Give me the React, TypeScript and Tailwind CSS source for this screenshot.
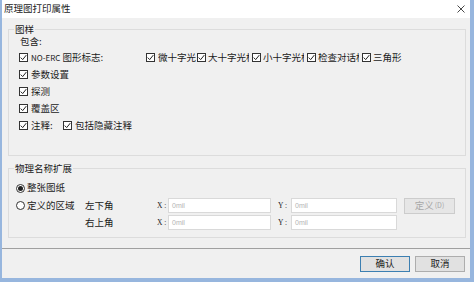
function Box({ checked = true }: { checked?: boolean }) {
  return (
    <span className="w-[9px] h-[9px] border border-[#333] bg-white flex items-center justify-center shrink-0">
      {checked && (
        <svg width="7" height="7" viewBox="0 0 7 7">
          <path d="M0.7 3.6 L2.7 5.6 L6.3 1.1" fill="none" stroke="#222" strokeWidth="1" />
        </svg>
      )}
    </span>
  );
}

function Radio({ checked = false }: { checked?: boolean }) {
  return (
    <span className="w-[9px] h-[9px] rounded-full border border-[#333] bg-white flex items-center justify-center shrink-0">
      {checked && <span className="w-[5px] h-[5px] rounded-full bg-[#222]" />}
    </span>
  );
}

function Field() {
  return (
    <div className="h-[15px] border border-[#d9d9d9] bg-white flex items-center pl-[3px] text-[7px] text-[#b4b4b4] font-['Liberation_Sans',sans-serif]">
      0mil
    </div>
  );
}

export default function App() {
  return (
    <div className="w-[474px] h-[282px] flex flex-col border-l-2 border-r-4 border-b-4 border-[#97b6de] bg-[#f0f0f0] text-[#1a1a1a] text-[9.5px] leading-none font-['Noto_Sans_CJK_SC',sans-serif]">
      {/* title bar */}
      <div className="h-[18px] bg-white flex items-center justify-between pl-[2px] pr-[5px] shrink-0">
        <span>原理图打印属性</span>
        <svg width="8" height="8" viewBox="0 0 8 8">
          <path d="M0.5 0.5 L7.5 7.5 M7.5 0.5 L0.5 7.5" stroke="#333" strokeWidth="0.9" />
        </svg>
      </div>

      <div className="flex-1 flex flex-col pl-[6px]">
        {/* 图样 */}
        <div className="relative mt-[11px] w-[458px] h-[127px] border border-[#dcdcdc] pt-[5px] pl-[10px]">
          <span className="absolute left-[5px] top-[-7px] px-[1px] bg-[#f0f0f0] leading-[12px]">图样</span>
          <div className="h-[14px] flex items-center ml-[1px]">包含:</div>
          <div className="h-[17px] flex items-center">
            <div className="w-[127px] flex items-center gap-[3px]">
              <Box />
              <span>
                <span className="text-[8px]">NO-ERC</span> 图形标志:
              </span>
            </div>
            <div className="w-[51px] flex items-center gap-[3px]">
              <Box />
              <span className="w-[38px] overflow-hidden whitespace-nowrap">微十字光标</span>
            </div>
            <div className="w-[55px] flex items-center gap-[2px]">
              <Box />
              <span className="w-[41px] overflow-hidden whitespace-nowrap">大十字光标</span>
            </div>
            <div className="w-[55px] flex items-center gap-[2px]">
              <Box />
              <span className="w-[41px] overflow-hidden whitespace-nowrap">小十字光标</span>
            </div>
            <div className="w-[55px] flex items-center gap-[2px]">
              <Box />
              <span className="w-[41px] overflow-hidden whitespace-nowrap">检查对话框</span>
            </div>
            <div className="flex items-center gap-[2px]">
              <Box />
              <span>三角形</span>
            </div>
          </div>
          <div className="h-[17px] flex items-center gap-[3px]">
            <Box />
            <span>参数设置</span>
          </div>
          <div className="h-[17px] flex items-center gap-[3px]">
            <Box />
            <span>探测</span>
          </div>
          <div className="h-[17px] flex items-center gap-[3px]">
            <Box />
            <span>覆盖区</span>
          </div>
          <div className="h-[17px] flex items-center">
            <div className="w-[44px] flex items-center gap-[3px]">
              <Box />
              <span>注释:</span>
            </div>
            <div className="flex items-center gap-[3px]">
              <Box />
              <span>包括隐藏注释</span>
            </div>
          </div>
        </div>

        {/* 物理名称扩展 */}
        <div className="relative mt-[12px] w-[458px] h-[70px] border border-[#dcdcdc] pt-[10px] pl-[7px]">
          <span className="absolute left-[5px] top-[-7px] px-[1px] bg-[#f0f0f0] leading-[12px]">物理名称扩展</span>
          <div className="h-[18px] flex items-center gap-[2px]">
            <Radio checked />
            <span>整张图纸</span>
          </div>
          <div className="h-[17px] flex items-center">
            <div className="w-[69px] flex items-center gap-[2px]">
              <Radio />
              <span>定义的区域</span>
            </div>
            <span className="w-[72px]">左下角</span>
            <span className="w-[11px] text-[7.5px] font-['Liberation_Serif',serif]">X :</span>
            <div className="w-[103px]">
              <Field />
            </div>
            <span className="ml-[7px] w-[13px] text-[7.5px] font-['Liberation_Serif',serif]">Y :</span>
            <div className="w-[106px]">
              <Field />
            </div>
            <div className="ml-[7px] w-[51px] h-[16px] border border-[#cccccc] bg-[#e6e6e6] flex items-center justify-center text-[#a8a8a8]">
              定义<span className="text-[7px] ml-[1px]">(D)</span>
            </div>
          </div>
          <div className="h-[17px] flex items-center">
            <div className="w-[69px]" />
            <span className="w-[72px]">右上角</span>
            <span className="w-[11px] text-[7.5px] font-['Liberation_Serif',serif]">X :</span>
            <div className="w-[103px]">
              <Field />
            </div>
            <span className="ml-[7px] w-[13px] text-[7.5px] font-['Liberation_Serif',serif]">Y :</span>
            <div className="w-[106px]">
              <Field />
            </div>
          </div>
        </div>
      </div>

      <div className="h-px bg-[#a0a0a0] shrink-0" />

      {/* buttons */}
      <div className="h-[29px] flex items-center justify-end gap-[5px] pr-[5px] shrink-0">
        <button className="w-[50px] h-[16px] border border-[#3c7fb1] bg-[#e1e1e1] flex items-center justify-center">
          确认
        </button>
        <button className="w-[50px] h-[16px] border border-[#adadad] bg-[#e1e1e1] flex items-center justify-center">
          取消
        </button>
      </div>
    </div>
  );
}
